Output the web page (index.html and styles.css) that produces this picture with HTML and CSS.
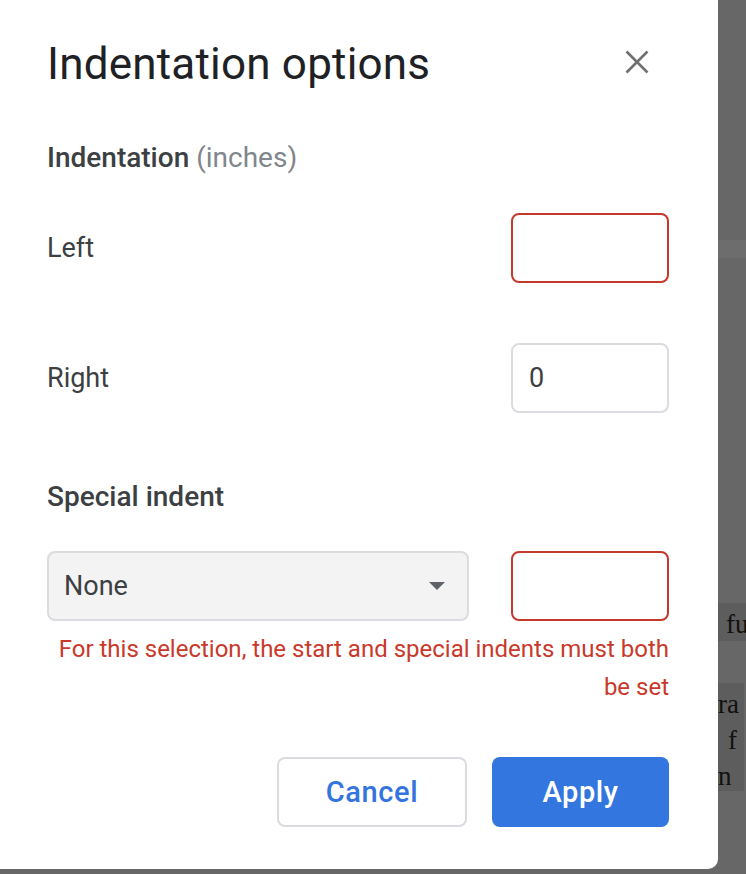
FILE: index.html
```html
<!DOCTYPE html>
<html lang="en">
<head>
<meta charset="utf-8">
<title>Indentation options</title>
<link rel="stylesheet" href="styles.css">
</head>
<body>
<div class="screen">
  <div class="dialog">
    <div class="title-row">
      <h1 class="title">Indentation options</h1>
      <button class="close" aria-label="Close">
        <svg width="24" height="24" viewBox="0 0 24 24"><path d="M1.5 1.5 L22.5 22.5 M22.5 1.5 L1.5 22.5" stroke="#707070" stroke-width="2.6" fill="none"/></svg>
      </button>
    </div>
    <div class="section-head">Indentation <span class="unit">(inches)</span></div>
    <div class="row row-left">
      <label class="label">Left</label>
      <div class="field error"></div>
    </div>
    <div class="row row-right">
      <label class="label">Right</label>
      <div class="field">0</div>
    </div>
    <div class="section-head special">Special indent</div>
    <div class="row row-special">
      <div class="select"><span>None</span><span class="caret"></span></div>
      <div class="field error"></div>
    </div>
    <p class="error-msg">For this selection, the start and special indents must both be set</p>
    <div class="actions">
      <button class="btn cancel">Cancel</button>
      <button class="btn apply">Apply</button>
    </div>
  </div>
  <div class="backdrop">
    <div class="band"></div>
    <div class="frag frag-fu">fu</div>
    <div class="frag-group">
      <div class="frag-line">ra</div>
      <div class="frag-line f-ind">f</div>
      <div class="frag-line">n</div>
    </div>
  </div>
</div>
</body>
</html>
```
FILE: styles.css
```css
* { box-sizing: border-box; }
html, body { margin: 0; padding: 0; }
body {
  width: 746px;
  height: 874px;
  overflow: hidden;
  background: #676767;
  font-family: Roboto, "Liberation Sans", sans-serif;
}
.screen {
  display: flex;
  height: 874px;
}
.dialog {
  width: 718px;
  height: 869px;
  flex: none;
  background: #fff;
  border-radius: 0 0 10px 0;
  padding: 0 49px 0 47px;
  display: flex;
  flex-direction: column;
}
.title-row {
  display: flex;
  align-items: center;
  justify-content: space-between;
  height: 62px;
  margin-top: 33px;
}
.title {
  margin: 0;
  font-size: 44px;
  font-weight: 400;
  color: #202124;
  letter-spacing: 0.2px;
  line-height: 62px;
}
.close {
  border: 0;
  background: none;
  padding: 0;
  margin: 0 20px 4px 0;
  width: 24px;
  height: 24px;
  display: flex;
}
.section-head {
  margin-top: 47px;
  font-size: 28px;
  font-weight: 500;
  color: #3c4043;
  line-height: 32px;
}
.section-head .unit { font-weight: 400; color: #80868b; }
.row {
  display: flex;
  align-items: center;
  justify-content: space-between;
  height: 70px;
}
.row-left { margin-top: 39px; }
.row-right { margin-top: 60px; }
.label {
  font-size: 27px;
  color: #3c4043;
}
.field {
  width: 158px;
  height: 70px;
  border: 2px solid #dadce0;
  border-radius: 8px;
  padding-left: 16px;
  display: flex;
  align-items: center;
  font-size: 27px;
  color: #3c4043;
}
.field.error { border-color: #c5392c; }
.section-head.special { margin-top: 68px; }
.row-special { margin-top: 38px; }
.select {
  width: 422px;
  height: 70px;
  background: #f3f3f3;
  border: 2px solid #dadce0;
  border-radius: 8px;
  display: flex;
  align-items: center;
  justify-content: space-between;
  padding: 0 22px 0 15px;
  font-size: 27px;
  color: #3c4043;
}
.caret {
  width: 0; height: 0;
  border-left: 8px solid transparent;
  border-right: 8px solid transparent;
  border-top: 8px solid #5f6368;
}
.error-msg {
  margin: 9px 0 0;
  text-align: right;
  font-size: 24px;
  line-height: 38px;
  color: #c9392b;
}
.actions {
  margin-top: 51px;
  display: flex;
  justify-content: flex-end;
  gap: 25px;
}
.btn {
  height: 70px;
  border-radius: 8px;
  font-family: Roboto, "Liberation Sans", sans-serif;
  font-size: 29px;
  font-weight: 500;
  letter-spacing: 0.6px;
  padding: 0;
}
.cancel {
  width: 190px;
  background: #fff;
  border: 2px solid #dadce0;
  color: #3474df;
}
.apply {
  width: 177px;
  background: #3476e0;
  border: 0;
  color: #fff;
}
.backdrop {
  flex: 1;
  display: flex;
  flex-direction: column;
  font-family: "Liberation Serif", serif;
  color: #111;
  font-size: 27px;
  overflow: hidden;
}
.band {
  margin-top: 240px;
  height: 18px;
  background: #6d6d6d;
}
.frag-fu {
  margin-top: 345px;
  height: 38px;
  background: #5d5d5d;
  padding-left: 8px;
  line-height: 42px;
  white-space: nowrap;
}
.frag-group {
  margin-top: 42px;
  background: #5d5d5d;
  width: 26px;
  white-space: nowrap;
}
.frag-line { height: 36px; line-height: 42px; }
.f-ind { padding-left: 10px; }
```
